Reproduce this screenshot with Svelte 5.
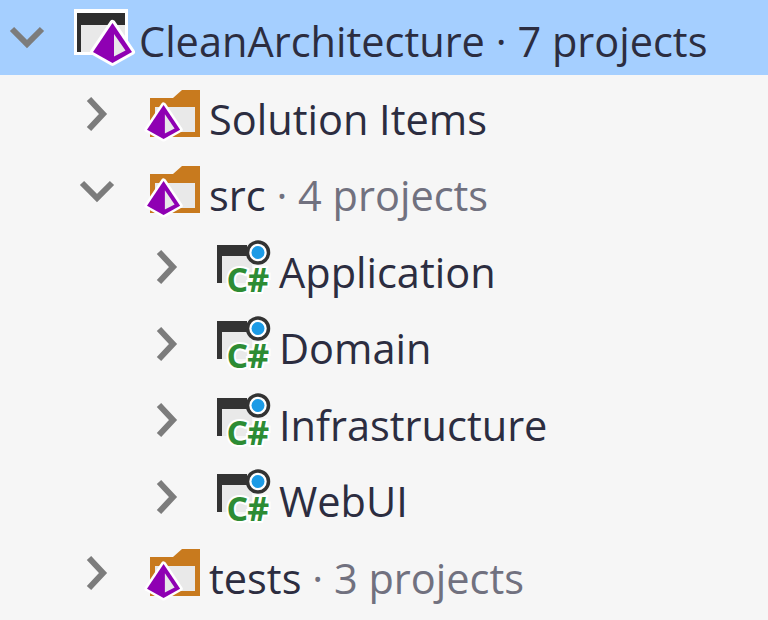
<script>
	const rows = [
		{ name: 'Solution Items', kind: 'folder', depth: 1, open: false },
		{ name: 'src', note: '4 projects', kind: 'folder', depth: 1, open: true },
		{ name: 'Application', kind: 'project', depth: 2, open: false },
		{ name: 'Domain', kind: 'project', depth: 2, open: false },
		{ name: 'Infrastructure', kind: 'project', depth: 2, open: false },
		{ name: 'WebUI', kind: 'project', depth: 2, open: false },
		{ name: 'tests', note: '3 projects', kind: 'folder', depth: 1, open: false }
	];
</script>

{#snippet chevron(open)}
	<svg class="chevron" width="54" height="40" viewBox="0 0 54 40">
		{#if open}
			<path d="M12 12 L27 27 L42 12" />
		{:else}
			<path d="M19 5 L33 20 L19 35" />
		{/if}
	</svg>
{/snippet}

{#snippet pyramid(x, y, s)}
	<g transform="translate({x} {y}) scale({s})">
		<path d="M19.5 0 L39 29 L19.5 40 L0 29 Z" fill="#8f00b3" stroke="#fff" stroke-width="6" stroke-linejoin="round" paint-order="stroke" />
		<path d="M21 11 L32.5 27.5 L21 33.5 Z" fill="#e8e8e8" />
	</g>
{/snippet}

<div class="tree">
	<div class="row root">
		{@render chevron(true)}
		<svg class="icon" width="60" height="60" viewBox="0 0 60 60">
			<rect x="1" y="1" width="54" height="46" fill="#fff" />
			<rect x="4" y="5" width="48" height="39" fill="#e9e9e9" />
			<path d="M4 5 H52 V17 H8 V44 H4 Z" fill="#2e2e2e" />
			{@render pyramid(20, 15, 1)}
		</svg>
		<span class="name">CleanArchitecture · 7 projects</span>
	</div>

	<div class="children">
		{#each rows as row}
			<div class="row" class:d1={row.depth === 1} class:d2={row.depth === 2}>
				{@render chevron(row.open)}
				{#if row.kind === 'folder'}
					<svg class="icon" width="60" height="60" viewBox="0 0 60 60">
						<path d="M7 10 H30 L39 2 H57 V49 H7 Z" fill="#c87a1e" />
						<rect x="12" y="19" width="40" height="25" fill="#e9e9e9" />
						{@render pyramid(4, 17, 0.85)}
					</svg>
				{:else}
					<svg class="icon" width="60" height="60" viewBox="0 0 60 60">
						<rect x="9" y="10" width="30" height="32" fill="#e9e9e9" />
						<path d="M4 4 H34 V15 H9 V42 H4 Z" fill="#333" />
						<circle cx="45" cy="11.5" r="10.5" fill="#fff" stroke="#333" stroke-width="3.5" />
						<circle cx="45" cy="11.5" r="6.5" fill="#1c9be6" />
						<text class="cs" x="13.5" y="51">C#</text>
					</svg>
				{/if}
				<span class="name">{row.name}</span>
				{#if row.note}<span class="note">&nbsp;· {row.note}</span>{/if}
			</div>
		{/each}
	</div>
</div>

<style>
	:global(body) { margin: 0; background: #f6f6f6; }
	.tree { width: 768px; height: 620px; overflow: hidden; font-family: "Open Sans", "Noto Sans", sans-serif; font-size: 41.5px; color: #2c2d40; }
	.row { display: flex; align-items: center; height: 76.5px; white-space: nowrap; }
	.root { height: 66px; padding-top: 9px; background: #a5cfff; }
	.children { padding-top: 6px; }
	.d1 { padding-left: 70px; }
	.d2 { padding-left: 140px; }
	.chevron { flex: none; margin-right: 19px; margin-bottom: 10px; }
	.chevron path { fill: none; stroke: #7c7c7c; stroke-width: 6; }
	.icon { flex: none; margin-right: 6px; margin-bottom: 3px; overflow: visible; }
	.root .icon { margin-bottom: 8px; }
	.name { line-height: 1; }
	.note { color: #71717f; line-height: 1; }
	.cs { font-family: "Open Sans", sans-serif; font-weight: 700; font-size: 34px; letter-spacing: -1px; fill: #2d8c34; stroke: #fff; stroke-width: 4px; paint-order: stroke; }
</style>
